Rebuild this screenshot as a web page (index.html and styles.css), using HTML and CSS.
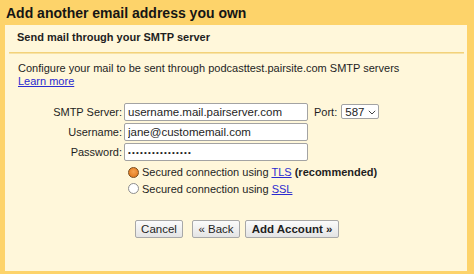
FILE: index.html
```html
<!DOCTYPE html>
<html>
<head>
<meta charset="utf-8">
<link rel="stylesheet" href="styles.css">
</head>
<body>
<div class="window">
  <h1 class="title">Add another email address you own</h1>
  <div class="panel">
    <h2 class="subtitle">Send mail through your SMTP server</h2>
    <div class="rule"></div>
    <p class="intro">Configure your mail to be sent through podcasttest.pairsite.com SMTP servers<br><a href="#" class="link">Learn more</a></p>
    <div class="form">
      <label class="label">SMTP Server:</label>
      <div class="field-row">
        <input class="input" type="text" value="username.mail.pairserver.com">
        <span class="port-label">Port:</span>
        <span class="select">587<svg class="chev" width="8" height="5" viewBox="0 0 8 5"><path d="M0.8 0.8 L4 4 L7.2 0.8" fill="none" stroke="#444" stroke-width="1"/></svg></span>
      </div>
      <label class="label">Username:</label>
      <div class="field-row"><input class="input" type="text" value="jane@customemail.com"></div>
      <label class="label">Password:</label>
      <div class="field-row"><input class="input pw" type="text" value="••••••••••••••••"></div>
    </div>
    <div class="radios">
      <div class="radio-row"><span class="radio checked"></span><span>Secured connection using <a href="#" class="link">TLS</a> <b>(recommended)</b></span></div>
      <div class="radio-row"><span class="radio"></span><span>Secured connection using <a href="#" class="link">SSL</a></span></div>
    </div>
    <div class="buttons">
      <button class="btn cancel">Cancel</button>
      <button class="btn back">« Back</button>
      <button class="btn primary">Add Account »</button>
    </div>
  </div>
</div>
</body>
</html>
```
FILE: styles.css
```css
html, body {
  margin: 0;
  padding: 0;
}
body {
  width: 474px;
  height: 274px;
  overflow: hidden;
  background: #fdd36a;
  font-family: "Liberation Sans", Arial, sans-serif;
  color: #1e1e1e;
}
.window {
  display: flex;
  flex-direction: column;
  height: 274px;
}
.title {
  margin: 0;
  padding: 2px 0 0 6px;
  height: 23px;
  line-height: 23px;
  font-size: 14px;
  font-weight: bold;
  color: #151515;
}
.panel {
  margin: 0 7px 3px 5px;
  flex: 1;
  background: #fff7da;
  font-size: 11px;
}
.subtitle {
  margin: 0;
  padding: 6px 0 0 12px;
  font-size: 11px;
  line-height: 13px;
  font-weight: bold;
}
.rule {
  margin: 8px 3px 0 4px;
  height: 1px;
  background: #f3d27a;
  border-bottom: 1px solid #f7e2a6;
}
.intro {
  margin: 8px 0 0 13px;
  line-height: 12.5px;
}
.link {
  color: #2b2bd0;
  text-decoration: underline;
}
.form {
  margin-top: 16px;
  display: grid;
  grid-template-columns: 117px auto;
  column-gap: 2px;
  row-gap: 2px;
}
.label {
  text-align: right;
  line-height: 18px;
}
.field-row {
  display: flex;
  align-items: center;
}
.input {
  box-sizing: border-box;
  width: 184px;
  height: 18px;
  margin: 0;
  padding: 0 3px;
  border: 1px solid #a3a3a3;
  border-radius: 2px;
  background: #fff;
  font-family: "Liberation Sans", Arial, sans-serif;
  font-size: 11.5px;
  color: #1e1e1e;
  outline: none;
}
.pw {
  font-size: 8px;
  letter-spacing: 1.2px;
}
.port-label {
  margin-left: 6px;
}
.select {
  box-sizing: border-box;
  margin-left: 4px;
  width: 38px;
  height: 15px;
  display: flex;
  align-items: center;
  padding-left: 3px;
  gap: 4px;
  border: 1px solid #a3a3a3;
  border-radius: 2px;
  background: #fff;
  font-size: 11.5px;
  align-self: flex-start;
  margin-top: 1px;
}
.chev {
  margin-top: 1px;
}
.radios {
  margin: 3px 0 0 123px;
}
.radio-row {
  display: flex;
  align-items: center;
  gap: 3px;
  height: 16.5px;
}
.radio {
  box-sizing: border-box;
  width: 11px;
  height: 11px;
  border-radius: 50%;
  border: 1px solid #8d8d8d;
  background: #fff;
}
.radio.checked {
  border-color: #7a4a1a;
  background: radial-gradient(circle at 50% 40%, #f6a350 0%, #e57f24 70%);
}
.buttons {
  margin: 23px 0 0 130px;
  display: flex;
  gap: 9px;
}
.btn {
  box-sizing: border-box;
  height: 18px;
  margin: 0;
  padding: 0;
  white-space: nowrap;
  text-align: center;
  border: 1px solid #a8a8a8;
  border-radius: 2px;
  background: linear-gradient(#fbfbfb, #e4e4e4);
  font-family: "Liberation Sans", Arial, sans-serif;
  font-size: 11.5px;
  color: #1e1e1e;
}
.btn.cancel {
  width: 48px;
}
.btn.back {
  width: 48px;
}
.btn.primary {
  margin-left: -4px;
  font-weight: bold;
  width: 94px;
}
```
